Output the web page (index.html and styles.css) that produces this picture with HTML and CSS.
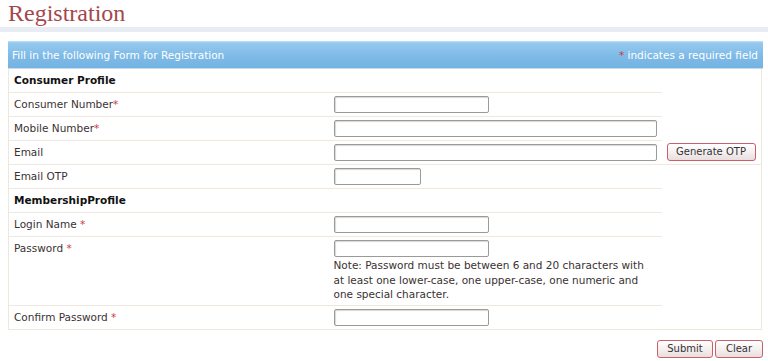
FILE: index.html
```html
<!DOCTYPE html>
<html lang="en">

<head>
    <meta charset="utf-8">
    <meta name="viewport" content="width=device-width, initial-scale=1">
    <title>Registration</title>
    <link rel="stylesheet" href="styles.css">
</head>

<body>
    <h1 class="page-title">Registration</h1>

    <div class="panel">
        <div class="panel-head">
            <span>Fill in the following Form for Registration</span>
            <span><span class="req">*</span> indicates a required field</span>
        </div>

        <table class="form-table">
            <colgroup>
                <col class="col-label">
                <col class="col-field">
                <col class="col-extra">
            </colgroup>
            <tr>
                <td class="section" colspan="2">Consumer Profile</td>
            </tr>
            <tr>
                <td class="label">Consumer Number<span class="req">*</span></td>
                <td class="field"><input type="text" class="input-md"></td>
            </tr>
            <tr>
                <td class="label">Mobile Number<span class="req">*</span></td>
                <td class="field"><input type="text" class="input-lg"></td>
            </tr>
            <tr>
                <td class="label">Email</td>
                <td class="field"><input type="text" class="input-lg"></td>
                <td class="extra"><button type="button" class="btn btn-otp">Generate OTP</button></td>
            </tr>
            <tr>
                <td class="label">Email OTP</td>
                <td class="field"><input type="text" class="input-sm"></td>
            </tr>
            <tr>
                <td class="section" colspan="2">MembershipProfile</td>
            </tr>
            <tr>
                <td class="label">Login Name <span class="req">*</span></td>
                <td class="field"><input type="text" class="input-md"></td>
            </tr>
            <tr>
                <td class="label">Password <span class="req">*</span></td>
                <td class="field">
                    <input type="password" class="input-md">
                    <p class="note">Note: Password must be between 6 and 20 characters with at least one lower-case, one upper-case, one numeric and one special character.</p>
                </td>
            </tr>
            <tr>
                <td class="label">Confirm Password <span class="req">*</span></td>
                <td class="field"><input type="password" class="input-md"></td>
            </tr>
        </table>
    </div>

    <div class="actions">
        <button type="submit" class="btn btn-submit">Submit</button>
        <button type="reset" class="btn btn-clear">Clear</button>
    </div>
</body>

</html>
```

FILE: styles.css
```css
html {
    box-sizing: border-box;
}

*,
*:before,
*:after {
    box-sizing: inherit;
}

body {
    margin: 0;
    font-family: "DejaVu Sans", Verdana, sans-serif;
    font-size: 10.5px;
    color: #3a3232;
    background: #fff;
}

.page-title {
    margin: 0;
    height: 32px;
    padding: 0 8px;
    font-family: "Liberation Serif", "Times New Roman", serif;
    font-size: 24px;
    font-weight: normal;
    line-height: 27px;
    color: #a4474d;
    border-bottom: 5px solid #e7edf3;
}

.panel {
    width: 755px;
    margin: 9px 0 0 8px;
}

.panel-head {
    display: flex;
    justify-content: space-between;
    align-items: center;
    height: 28px;
    padding: 0 5px 0 4px;
    color: #fff;
    background: linear-gradient(to bottom, #bfe0f8 0, #94c9ef 2px, #7db9e6 60%, #74b3e3 100%);
    border-bottom: 1px solid #c9dbe8;
}

.req {
    color: #cc3b3b;
}

.form-table {
    width: 754px;
    border-collapse: collapse;
    border: 1px solid #efe6dc;
    border-top: 0;
}

.col-label {
    width: 322px;
}

.col-field {
    width: 331px;
}

.form-table td {
    padding: 3px 5px;
    vertical-align: top;
    line-height: 17px;
}

.form-table .label,
.form-table .field,
.form-table .section {
    border-bottom: 1px solid #f0e8df;
}

.form-table .field {
    padding-left: 3px;
}

.form-table .section {
    font-weight: bold;
    color: #111;
}

.form-table .extra {
    padding: 2px 5px;
    border-bottom: 1px solid #f0e8df;
}

input {
    display: block;
    height: 17px;
    margin: 0;
    padding: 0 3px;
    border: 1px solid #9a9a9a;
    border-radius: 2px;
    box-shadow: inset 1px 1px 1px #d8d8d8;
    font: inherit;
}

.input-sm {
    width: 87px;
}

.input-md {
    width: 155px;
}

.input-lg {
    width: 323px;
}

.note {
    margin: 1px 0 0;
    width: 322px;
    line-height: 14.5px;
    color: #3a3232;
}

.btn {
    height: 18px;
    padding: 0 8px;
    font-family: "DejaVu Sans", Verdana, sans-serif;
    font-size: 10px;
    color: #333;
    background: linear-gradient(to bottom, #ffffff 0, #f6f0f0 50%, #e8dede 100%);
    border: 1px solid #c8606b;
    border-radius: 3px;
    cursor: pointer;
}

.btn-otp {
    width: 89px;
}

.actions {
    display: flex;
    justify-content: flex-end;
    gap: 2px;
    width: 763px;
    margin-top: 10px;
}

.btn-submit {
    width: 56px;
}

.btn-clear {
    width: 48px;
}
```
